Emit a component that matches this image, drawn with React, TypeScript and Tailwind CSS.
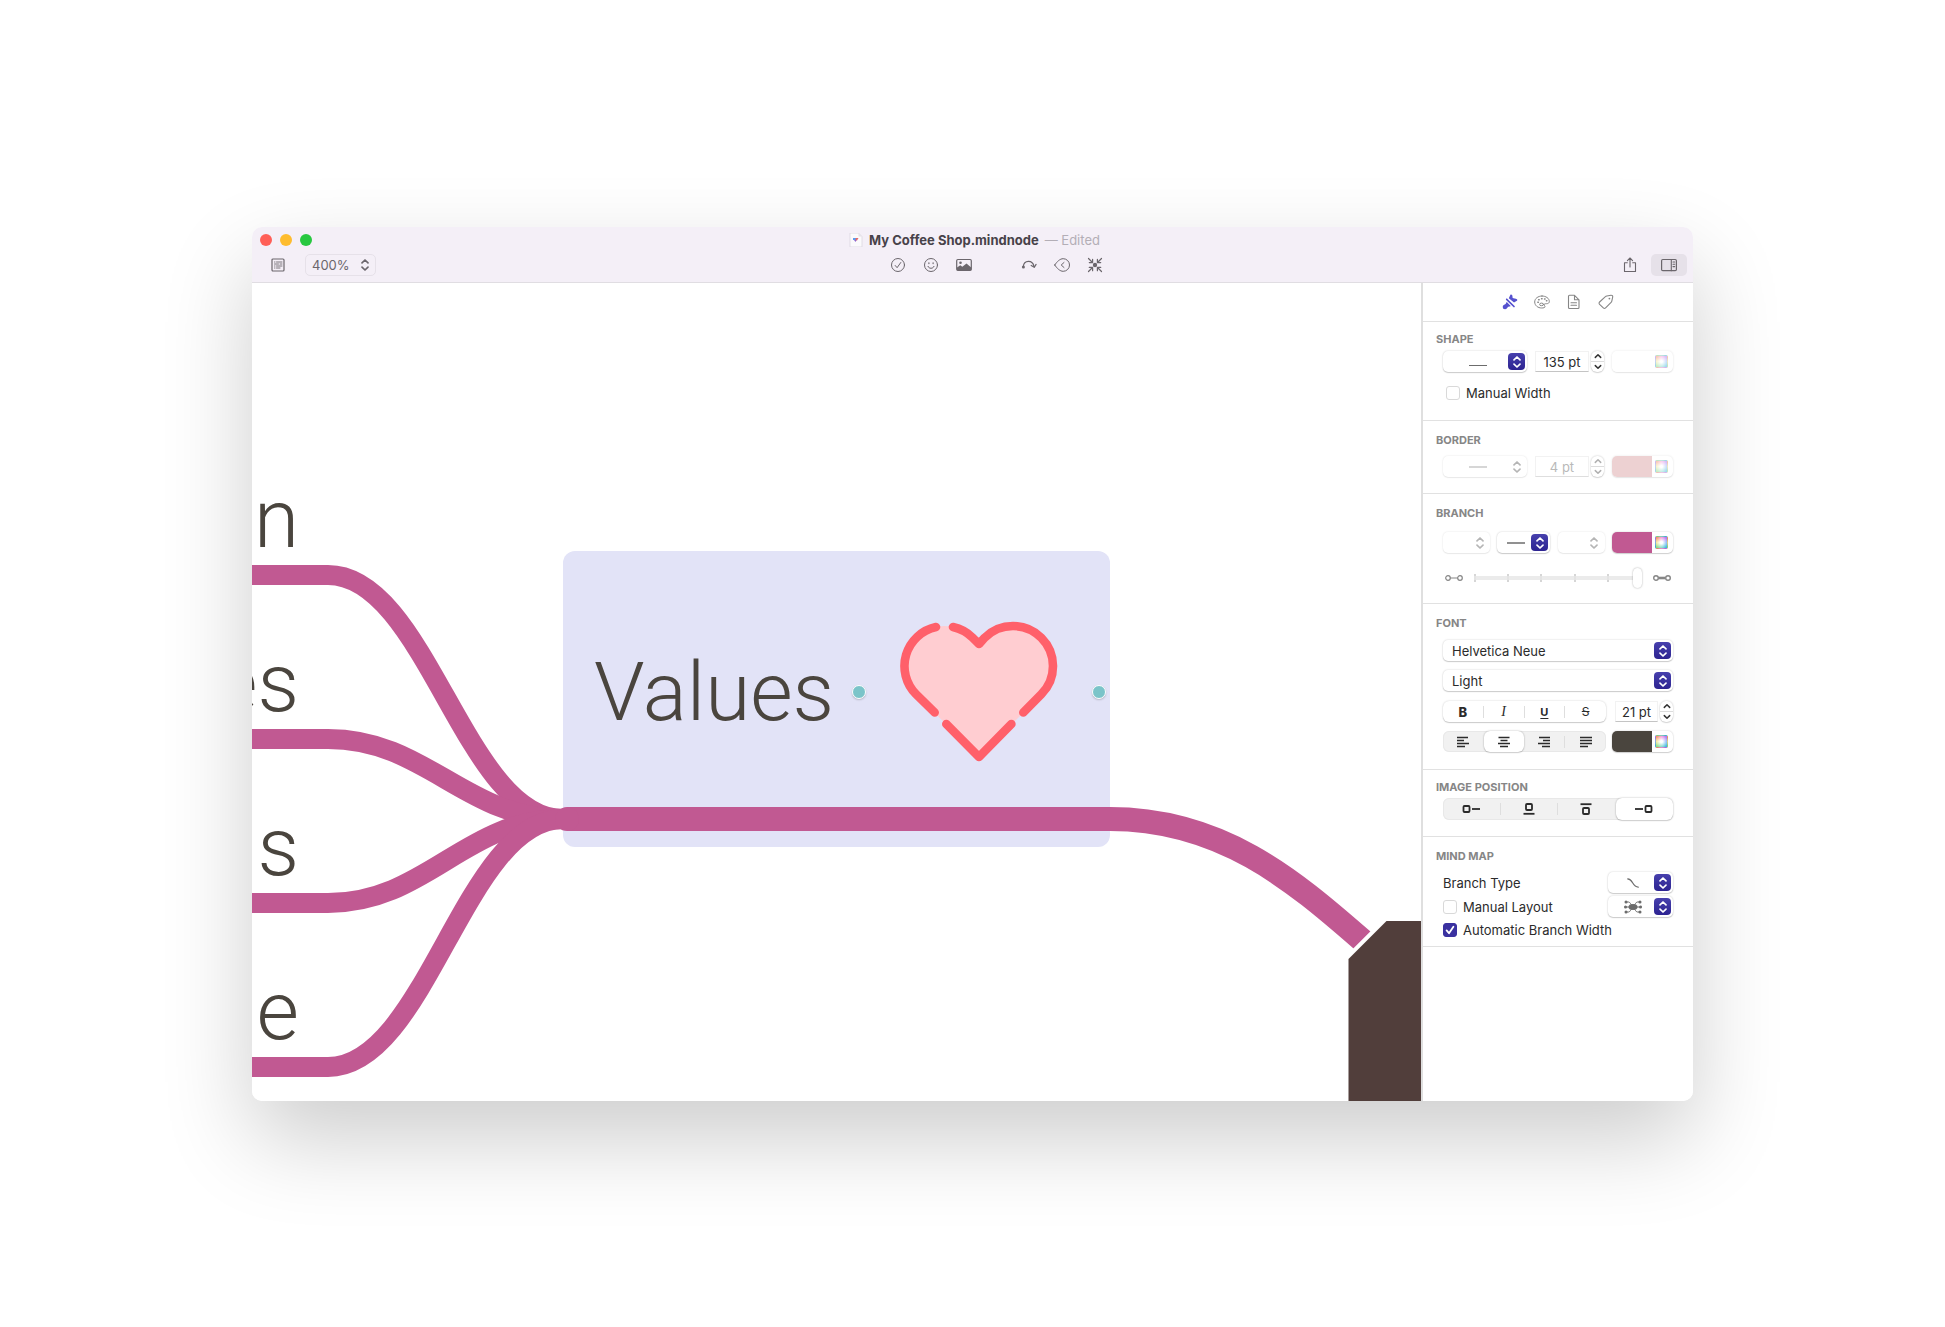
import type { ReactNode } from 'react';
import clsx from 'clsx';

interface IconProps {
  children: ReactNode;
  className?: string;
  box?: string;
}

function Icon({ children, className = 'size-4', box = '0 0 16 16' }: IconProps) {
  return (
    <svg
      viewBox={box}
      className={clsx('shrink-0', className)}
      fill="none"
      stroke="currentColor"
      strokeWidth={1}
      strokeLinecap="round"
      strokeLinejoin="round"
      aria-hidden="true"
    >
      {children}
    </svg>
  );
}

const lineGlyph = <path d="M0 8H18" strokeWidth={1.5} strokeLinecap="butt" />;

function Chevrons({ className }: { className?: string }) {
  return (
    <svg viewBox="0 0 10 14" className={clsx('h-3.5 w-2.5', className)} fill="none" stroke="currentColor" strokeWidth={1.7} strokeLinecap="round" strokeLinejoin="round" aria-hidden="true">
      <path d="M2 4.8 5 2l3 2.8M2 9.2 5 12l3-2.8" />
    </svg>
  );
}

interface PopUpProps {
  label: string;
  className: string;
  value?: string;
  glyph?: ReactNode;
  disabled?: boolean;
}

function PopUp({ label, className, value, glyph, disabled }: PopUpProps) {
  return (
    <div className={clsx('relative flex h-[21px] shrink-0', className)}>
      <select
        aria-label={label}
        disabled={disabled}
        className={clsx(
          'w-full appearance-none rounded-[5px] bg-white pl-[9px] text-[13px] leading-5 text-[#2b2b2b]',
          disabled
            ? 'shadow-[0_0_2px_rgba(0,0,0,0.12),0_1px_1px_rgba(0,0,0,0.06)]'
            : 'shadow-[0_0_2px_rgba(0,0,0,0.2),0_1px_1px_rgba(0,0,0,0.16)]'
        )}
      >
        <option aria-label={value ?? label}>{value}</option>
      </select>
      {glyph && (
        <span className={clsx('pointer-events-none absolute inset-y-0 right-[22px] left-0 flex items-center justify-center', disabled ? 'text-[#c9c9c9]' : 'text-[#6c6c6c]')}>
          {glyph}
        </span>
      )}
      <span
        className={clsx(
          'pointer-events-none absolute top-[2px] right-[2px] flex size-[17px] items-center justify-center rounded-sm',
          disabled ? 'text-[#b5b5b5]' : 'bg-linear-to-b from-[#4740ad] to-[#2d2391] text-white'
        )}
      >
        <Chevrons />
      </span>
    </div>
  );
}

interface StepFieldProps {
  label: string;
  value: string;
  inputClass: string;
  disabled?: boolean;
}

function StepField({ label, value, inputClass, disabled }: StepFieldProps) {
  return (
    <div className="flex shrink-0 items-center gap-0.5">
      <input
        type="text"
        aria-label={label}
        defaultValue={value}
        disabled={disabled}
        className={clsx(
          'h-[21px] border border-[#f2f2f2] bg-white text-center text-[13px]',
          disabled ? 'border-b-[#dedede] text-[#b9b9b9]' : 'border-b-[#c4c4c4] text-[#2b2b2b]',
          inputClass
        )}
      />
      <div
        className={clsx(
          'flex h-[21px] w-[13px] flex-col divide-y divide-[#dcdcdc] rounded-md bg-white shadow-[0_0_2px_rgba(0,0,0,0.25),0_1px_1px_rgba(0,0,0,0.1)]',
          disabled ? 'text-[#b0b0b0]' : 'text-[#333]'
        )}
      >
        <button type="button" aria-label={`Increase ${label}`} disabled={disabled} className="flex flex-1 items-center justify-center">
          <Icon box="0 0 8 6" className="h-1.5 w-2"><path d="M1.3 4.4 4 1.8l2.7 2.6" strokeWidth={1.5} /></Icon>
        </button>
        <button type="button" aria-label={`Decrease ${label}`} disabled={disabled} className="flex flex-1 items-center justify-center">
          <Icon box="0 0 8 6" className="h-1.5 w-2"><path d="M1.3 1.6 4 4.2l2.7-2.6" strokeWidth={1.5} /></Icon>
        </button>
      </div>
    </div>
  );
}

function ColorWell({ label, swatch, faded }: { label: string; swatch: string; faded?: boolean }) {
  return (
    <button
      type="button"
      aria-label={label}
      className={clsx(
        'flex h-[21px] w-[61px] shrink-0 overflow-hidden rounded-[5px] bg-white shadow-[0_0_2px_rgba(0,0,0,0.2),0_1px_1px_rgba(0,0,0,0.14)]',
        faded && 'opacity-50'
      )}
    >
      <span className={clsx('h-full w-10', swatch)} />
      <span className="flex h-full items-center pl-[3px]">
        <span className="size-[13px] rounded-xs border border-black/10 bg-[radial-gradient(circle,white_15%,transparent_85%),conic-gradient(#f47ad0,#b47af4,#6aa2f8,#44bce0,#66d0bc,#92e084,#f2e074,#f6986c,#f47ad0)]" />
      </span>
    </button>
  );
}

function Section({ title, className, children }: { title: string; className: string; children: ReactNode }) {
  return (
    <section className={clsx('border-b border-[#e1e1e1] px-5', className)}>
      <h2 className="-ml-[7px] text-[11px] leading-4 font-bold text-[#868686]">{title}</h2>
      {children}
    </section>
  );
}

function CheckRow({ label, checked, className }: { label: string; checked?: boolean; className?: string }) {
  return (
    <label className={clsx('flex items-center text-[13px] leading-4 text-[#2b2b2b]', className)}>
      <span className="relative flex size-3.5">
        <input
          type="checkbox"
          defaultChecked={checked}
          className="peer size-3.5 appearance-none rounded-[3px] border border-[#d9d9d9] bg-white checked:border-[#3a31a0] checked:bg-[#3a31a0]"
        />
        <Icon box="0 0 14 14" className="pointer-events-none absolute inset-0 hidden size-3.5 text-white peer-checked:block">
          <path d="m3.6 7.4 2.4 2.8 4.4-6.4" strokeWidth={1.8} />
        </Icon>
      </span>
      {label}
    </label>
  );
}

interface Segment {
  label: string;
  glyph: ReactNode;
}

function Segments({ items, active, className }: { items: Segment[]; active?: number; className: string }) {
  return (
    <div
      className={clsx(
        'flex shrink-0 rounded-md',
        active === undefined
          ? 'bg-white shadow-[0_0_2px_rgba(0,0,0,0.2),0_1px_1px_rgba(0,0,0,0.16)]'
          : 'bg-[#f1f1f1] shadow-[inset_0_0_0_1px_#e8e8e8]',
        className
      )}
    >
      {items.map((item, i) => (
        <div key={item.label} className="flex flex-1 items-center">
          <button
            type="button"
            aria-label={item.label}
            aria-pressed={i === active}
            className={clsx(
              'flex h-full flex-1 items-center justify-center text-[#2b2b2b]',
              i === active && 'rounded-md bg-white shadow-[0_0_2px_rgba(0,0,0,0.3),0_1px_1px_rgba(0,0,0,0.12)]'
            )}
          >
            {item.glyph}
          </button>
          {i < items.length - 1 && (
            <span className={clsx('h-3 w-px', i === active || i + 1 === active ? 'bg-transparent' : 'bg-[#dedede]')} />
          )}
        </div>
      ))}
    </div>
  );
}

const styleSegments: Segment[] = [
  { label: 'Bold', glyph: <span className="text-[13px] leading-4 font-extrabold">B</span> },
  { label: 'Italic', glyph: <span className="font-['Liberation_Serif',serif] text-[14px] leading-4 italic">I</span> },
  { label: 'Underline', glyph: <span className="text-[11px] leading-4 font-bold underline underline-offset-2">U</span> },
  { label: 'Strikethrough', glyph: <span className="text-[12px] leading-4 line-through">S</span> },
];

const alignGlyph = (d: string) => (
  <Icon className="h-3 w-4" box="0 0 16 12">
    <path d={d} strokeWidth={1.3} strokeLinecap="butt" />
  </Icon>
);

const alignSegments: Segment[] = [
  { label: 'Align left', glyph: alignGlyph('M2 1.5h11M2 4.5h7M2 7.5h12M2 10.5h8') },
  { label: 'Align centre', glyph: alignGlyph('M2.5 1.5h11M4.5 4.5h7M2 7.5h12M4 10.5h8') },
  { label: 'Align right', glyph: alignGlyph('M3 1.5h11M7 4.5h7M2 7.5h12M6 10.5h8') },
  { label: 'Justify', glyph: alignGlyph('M2 1.5h12M2 4.5h12M2 7.5h12M2 10.5h8') },
];

const imageGlyph = (x: number, y: number, d: string) => (
  <Icon className="h-3 w-[18px]" box="0 0 18 12">
    <rect x={x} y={y} width={6} height={6} rx={1} strokeWidth={1.8} />
    <path d={d} strokeWidth={1.8} strokeLinecap="butt" />
  </Icon>
);

const imageSegments: Segment[] = [
  { label: 'Image left', glyph: imageGlyph(1.5, 3, 'M10 6h8') },
  { label: 'Image above', glyph: imageGlyph(6, 1, 'M3.5 10.8h11') },
  { label: 'Image below', glyph: imageGlyph(6, 5, 'M3.5 1.2h11') },
  { label: 'Image right', glyph: imageGlyph(10.5, 3, 'M0 6h8') },
];

function ToolButton({ label, className, children }: { label: string; className?: string; children: ReactNode }) {
  return (
    <button type="button" aria-label={label} className={clsx('flex h-[22px] items-center justify-center', className)}>
      {children}
    </button>
  );
}

function TitleBar() {
  return (
    <header className="border-b border-[#e0dde2] bg-[#f4eff7] pb-[5px] text-[#6b666c]">
      <div className="grid h-[26px] grid-cols-[1fr_auto_1fr] items-center">
        <div className="flex gap-2 pl-2">
          <button type="button" aria-label="Close" className="size-3 rounded-full bg-[#ff5f57]" />
          <button type="button" aria-label="Minimise" className="size-3 rounded-full bg-[#febc2e]" />
          <button type="button" aria-label="Zoom window" className="size-3 rounded-full bg-[#28c840]" />
        </div>
        <div className="flex items-center gap-1.5 pl-1 text-[13px] leading-4">
          <svg viewBox="0 0 14 14" className="size-3.5" aria-hidden="true">
            <path d="M1 0h8.500l3.500 3.500V14H1z" fill="#fbfafc" stroke="#dcd7e0" strokeWidth={0.8} />
            <path d="M9.500 0v3.500H13z" fill="#e6e2e8" />
            <path d="M4 5h3v2H4z" fill="#5a9cf0" />
            <path d="M7 5h2.500L8 7.500H6z" fill="#e46a6a" />
            <path d="M5 7h2.500L6.500 9z" fill="#8b6ad0" />
          </svg>
          <h1 className="font-bold text-[#474249]">My Coffee Shop.mindnode</h1>
          <span className="text-[#b3aeb6]">— Edited</span>
        </div>
      </div>

      <div className="flex h-6 items-center justify-between pr-1.5 pl-[17px]">
        <div className="flex items-center gap-[18px]">
          <ToolButton label="Outline" className="w-[18px]">
            <Icon>
              <rect x={2} y={2} width={12} height={12} rx={1} strokeWidth={1.2} />
              <path d="M4.500 5h.5M6.500 5H12M4.500 7h4M10 7h2M4.500 9h.5M6.500 9H12M4.500 11h.5M6.500 11H10" strokeWidth={0.9} />
            </Icon>
          </ToolButton>
          <div className="relative flex h-[22px] w-[71px]">
            <select aria-label="Zoom" className="w-full appearance-none rounded-[5px] border border-[#e6e1e9] bg-transparent pl-1.5 text-[13px] leading-5">
              <option>400%</option>
            </select>
            <span className="pointer-events-none absolute inset-y-0 right-1.5 flex items-center">
              <Chevrons />
            </span>
          </div>
        </div>

        <div className="flex">
          <ToolButton label="Task" className="w-[33px]">
            <Icon>
              <circle cx={8} cy={8} r={6.500} />
              <path d="m5.200 8.500 1.900 2.200 3.700-5.200" />
            </Icon>
          </ToolButton>
          <ToolButton label="Sticker" className="w-[33px]">
            <Icon>
              <circle cx={8} cy={8} r={6.500} />
              <path d="M5 9.400c.6 2.600 5.400 2.600 6 0" />
              <path d="M5.900 5.800v.8M10.100 5.800v.8" strokeWidth={1.200} />
            </Icon>
          </ToolButton>
          <ToolButton label="Image" className="w-[33px]">
            <Icon>
              <rect x={0.700} y={2.500} width={14.600} height={11} rx={1.200} strokeWidth={1.200} />
              <path d="M1 13.300v-2.800l3.300-2.200 2 1.500L10.500 6.500l4.700 4v2.800z" fill="currentColor" stroke="none" />
              <circle cx={4.500} cy={5.800} r={1.300} fill="currentColor" stroke="none" />
            </Icon>
          </ToolButton>
          <ToolButton label="Connection" className="ml-8 w-[33px]">
            <Icon>
              <path d="M2.300 9.500C3 3 11.500 2.500 13 9.500" strokeWidth={1.200} />
              <path d="m10.200 8.500 3 1.800 1.900-2.900" strokeWidth={1.200} />
              <circle cx={2.400} cy={10} r={1.500} fill="currentColor" stroke="none" />
            </Icon>
          </ToolButton>
          <ToolButton label="Fold" className="w-[33px]">
            <Icon>
              <path d="M.8 8C3 4.500 6 1.700 9.200 1.700a6.300 6.300 0 0 1 0 12.600C6 14.300 3 11.500.8 8z" />
              <path d="M10 5.500 7.200 8l2.800 2.500" />
            </Icon>
          </ToolButton>
          <ToolButton label="Focus" className="w-[33px]">
            <Icon>
              <circle cx={8} cy={8} r={2.200} fill="currentColor" stroke="none" />
              <path d="m1.500 1.500 4 4M5.600 2.300v3.300H2.300M14.500 1.500l-4 4M10.400 2.300v3.300h3.300M1.500 14.500l4-4M5.600 13.700v-3.300H2.300M14.500 14.500l-4-4M10.400 13.700v-3.300h3.300" strokeWidth={1.200} />
            </Icon>
          </ToolButton>
        </div>

        <div className="flex gap-[7px]">
          <ToolButton label="Share" className="w-7">
            <Icon>
              <path d="M5.300 5.800H2.500v8.700h11V5.800h-2.800M8 10V1.200M5.400 3.600 8 1l2.600 2.600" strokeWidth={1.100} />
            </Icon>
          </ToolButton>
          <ToolButton label="Inspector" className="w-9 rounded-[5px] bg-[#e6e1e9]">
            <Icon>
              <rect x={0.600} y={2.500} width={14.800} height={11.200} rx={1.200} strokeWidth={1.200} />
              <path d="M10.300 2.500v11.200M12 5h1.700M12 7.300h1.700M12 9.600h1.700" strokeWidth={1.100} />
            </Icon>
          </ToolButton>
        </div>
      </div>
    </header>
  );
}

const sideNodes = [
  { text: 'n', pos: 'top-[186px]' },
  { text: 'es', pos: 'top-[350px]' },
  { text: 's', pos: 'top-[514px]' },
  { text: 'e', pos: 'top-[678px]' },
];

const branchEnds = [292, 456, 620, 784];

function Handle() {
  return <span className="size-3.5 shrink-0 rounded-full border-[1.5px] border-white bg-[#7bc4c9] shadow-[0_1px_2px_rgba(0,0,0,0.2)]" />;
}

function Canvas() {
  return (
    <main className="relative min-w-0 flex-1 overflow-hidden bg-white font-['Roboto',sans-serif] text-[82px] leading-[100px] font-light text-[#4a453e]">
      {/* selected node */}
      <div className="absolute top-[268px] left-[311px] h-[296px] w-[547px] rounded-xl bg-[#e2e3f7]">
        <div className="flex h-[281px] items-center pl-[31px]">
          <span className="w-[258px]">Values</span>
          <Handle />
          <svg viewBox="648 338 158 142" className="mx-[34px] h-[142px] w-[158px] shrink-0" fill="none" stroke="#ff606a" strokeWidth={8.6} strokeLinecap="round" strokeLinejoin="round" role="img" aria-label="Heart">
            <path d="M727 474 664 411.300A40 40 0 0 1 720.700 354.700L727 361l6-6.300A40 40 0 0 1 789.700 411.300z" fill="#ffcdd1" stroke="none" />
            <path d="M684 344A40 40 0 0 0 664.100 411.300L682.700 429.500" />
            <path d="M701 344a40 40 0 0 1 19.700 10.700L727 361l5.700-6.300A40 40 0 0 1 789.300 411.300L771.300 429.500" />
            <path d="m694.300 441 32.700 33 32.400-33" />
          </svg>
          <Handle />
        </div>
      </div>

      <svg className="absolute inset-0 size-full" fill="none" stroke="#c15992" aria-hidden="true">
        {branchEnds.map((y) => (
          <path key={y} d={`M0 ${y}H76C174 ${y} 213 536 311 536`} strokeWidth={20} />
        ))}
        <path d="M315 536H858C969 536 1040 596 1110 657L1130 675" strokeWidth={24} />
        <circle cx={315} cy={536} r={12} fill="#c15992" stroke="none" />
        <path d="M1096.500 900V676L1134.500 638H1300V900z" fill="#513e3b" stroke="#fff" strokeWidth={8} paintOrder="stroke" />
      </svg>

      {sideNodes.map((node) => (
        <div key={node.text} className={clsx('absolute left-0 flex w-[47px] justify-end', node.pos)}>
          {node.text}
        </div>
      ))}
    </main>
  );
}

const inspectorTabs = [
  {
    label: 'Style',
    icon: (
      <g fill="currentColor" stroke="none">
        <path d="M6.800 4.200 8.300.9c.6-.9 1.600-.3 1.900.4.500 1 .2 1.900.5 2.600.900.7 3.200.4 4.200 1.300.8.8.4 1.500-.4 1.900l-2.500 1.300z" />
        <path d="m5.300 4.700 7.300 7.300c.4.400.4.800 0 1.100-.4.400-.800.4-1.200 0L4.100 5.900c-.3-.4-.3-.8 0-1.200.4-.4.8-.4 1.200 0z" />
        <path d="m4.800 8 3.900 3.900c-.9.900-2 .4-2.700.8-.5.900-1.200 2.500-3 2.600a2.300 2.300 0 0 1-2.300-2.400c0-1.700 1.800-2.200 2.900-2.900.5-.500.3-1.100 1.200-2z" />
      </g>
    ),
  },
  {
    label: 'Theme',
    icon: (
      <>
        <path d="M8 2C3.800 2 .7 4.600.7 8s3.100 6 7 6c1.700 0 3.300-.3 3.300-1.400 0-.9-.9-1-.9-1.800 0-1 1-1.100 2.300-1.100 1.700 0 2.900-.6 2.900-2.200C15.300 4.300 12 2 8 2z" />
        <ellipse cx={7.600} cy={10.400} rx={2} ry={1.300} />
        <path d="M3.800 8.200h.6M4.600 5.800h.6M7.500 4.700h.6M10.500 5h.6M12.400 6.700h.5" strokeWidth={1.400} />
      </>
    ),
  },
  {
    label: 'Document',
    icon: <path d="M3.500 1.300h5L13 5.800v7.700a1 1 0 0 1-1 1H3.500a1 1 0 0 1-1-1V2.300a1 1 0 0 1 1-1zM8.500 1.500v4.300H13M5 8.700h5.500M5 11.300h5.500" strokeWidth={1.100} />,
  },
  {
    label: 'Tags',
    icon: (
      <>
        <path d="M8.800 2 13 1.300c1.200-.1 1.900.7 1.700 1.700l-.9 4.200c-.1.500-.3.800-.7 1.200l-5.500 5.500c-.7.700-1.600.7-2.300 0L1.600 10.300c-.7-.7-.7-1.600 0-2.300L7.400 2.700c.4-.4.8-.6 1.400-.7z" strokeWidth={1.100} />
        <circle cx={11.400} cy={4.600} r={0.900} fill="currentColor" stroke="none" />
      </>
    ),
  },
];

function Inspector() {
  return (
    <aside className="w-[272px] shrink-0 border-l-2 border-[#dfdfdf] bg-white">
      <nav className="flex h-[39px] items-center justify-center gap-4 border-b border-[#e1e1e1]">
        {inspectorTabs.map((tab, i) => (
          <button key={tab.label} type="button" aria-label={tab.label} className={i === 0 ? 'text-[#5551cf]' : 'text-[#868686]'}>
            <Icon>{tab.icon}</Icon>
          </button>
        ))}
      </nav>

      <Section title="SHAPE" className="pt-[9px] pb-[19px]">
        <div className="mt-1 flex justify-between">
          <PopUp label="Shape" className="w-[84px]" glyph={<Icon className="ml-2 h-4 w-[18px]" box="0 0 18 16"><path d="M0 11.500H18" strokeLinecap="butt" /></Icon>} />
          <StepField label="Shape width" value="135 pt" inputClass="w-[54px]" />
          <ColorWell label="Shape colour" swatch="bg-white" faded />
        </div>
        <CheckRow label="Manual Width" className="mt-[13px] ml-[3px] gap-1.5" />
      </Section>

      <Section title="BORDER" className="pt-[11px] pb-4">
        <div className="mt-2 flex justify-between">
          <PopUp label="Border style" className="w-[84px]" disabled glyph={<Icon className="ml-2 h-4 w-[18px]" box="0 0 18 16">{lineGlyph}</Icon>} />
          <StepField label="Border width" value="4 pt" inputClass="w-[54px]" disabled />
          <ColorWell label="Border colour" swatch="bg-[#dda5a7]" faded />
        </div>
      </Section>

      <Section title="BRANCH" className="pt-[11px] pb-[15px]">
        <div className="mt-[11px] flex justify-between">
          <PopUp label="Branch start" className="w-[47px]" disabled />
          <PopUp label="Branch line" className="w-[53px]" glyph={<Icon className="ml-1.5 h-4 w-[18px]" box="0 0 18 16">{lineGlyph}</Icon>} />
          <PopUp label="Branch end" className="w-[47px]" disabled />
          <ColorWell label="Branch colour" swatch="bg-[#c15992]" />
        </div>
        <div className="mt-3.5 flex h-[21px] items-center justify-between px-0.5 text-[#868686]">
          <Icon className="h-2 w-[18px]" box="0 0 18 8">
            <circle cx={3} cy={4} r={2.300} strokeWidth={1.200} />
            <circle cx={15} cy={4} r={2.300} strokeWidth={1.200} />
            <path d="M5.500 4h7" strokeWidth={1.200} />
          </Icon>
          <div className="grid w-[168px] items-center">
            <div className="flex justify-between [grid-area:1/1]">
              {[0, 1, 2, 3, 4].map((tick) => (
                <span key={tick} className="h-2 w-0.5 bg-[#d6d6d6]" />
              ))}
              <span className="w-0.5" />
            </div>
            <input
              type="range"
              aria-label="Branch width"
              min={0}
              max={5}
              defaultValue={5}
              className="relative h-[21px] w-full appearance-none bg-transparent [grid-area:1/1] [&::-webkit-slider-runnable-track]:h-1 [&::-webkit-slider-runnable-track]:bg-[#e6e6e6]/80 [&::-webkit-slider-thumb]:-mt-2 [&::-webkit-slider-thumb]:h-5 [&::-webkit-slider-thumb]:w-[9px] [&::-webkit-slider-thumb]:appearance-none [&::-webkit-slider-thumb]:rounded-full [&::-webkit-slider-thumb]:bg-white [&::-webkit-slider-thumb]:shadow-[0_0_2px_rgba(0,0,0,0.35)]"
            />
          </div>
          <Icon className="h-2 w-[18px]" box="0 0 18 8">
            <circle cx={3} cy={4} r={2.300} strokeWidth={1.400} />
            <circle cx={15} cy={4} r={2.300} strokeWidth={1.400} />
            <path d="M5.500 4h7" strokeWidth={2.600} strokeLinecap="butt" />
          </Icon>
        </div>
      </Section>

      <Section title="FONT" className="pt-[11px] pb-[17px]">
        <div className="mt-[9px] flex flex-col gap-[9px]">
          <PopUp label="Font family" className="w-full" value="Helvetica Neue" />
          <PopUp label="Font weight" className="w-full" value="Light" />
          <div className="mt-px flex justify-between">
            <Segments items={styleSegments} className="h-[21px] w-[163px]" />
            <StepField label="Font size" value="21 pt" inputClass="w-[43px]" />
          </div>
          <div className="flex justify-between">
            <Segments items={alignSegments} active={1} className="h-[21px] w-[163px]" />
            <ColorWell label="Font colour" swatch="bg-[#4a453e]" />
          </div>
        </div>
      </Section>

      <Section title="IMAGE POSITION" className="pt-[9px] pb-4">
        <Segments items={imageSegments} active={3} className="mt-[3px] h-[22px]" />
      </Section>

      <Section title="MIND MAP" className="pt-[11px] pb-2">
        <div className="mt-2 flex items-center justify-between">
          <span className="text-[13px] leading-4 text-[#2b2b2b]">Branch Type</span>
          <PopUp label="Branch Type" className="w-[65px]" glyph={<Icon className="ml-1.5 size-3"><path d="M1 2.500C8 2.500 7 13.500 15 13.500" strokeWidth={1.600} /></Icon>} />
        </div>
        <div className="mt-[3px] flex items-center justify-between">
          <CheckRow label="Manual Layout" className="gap-1.5" />
          <PopUp
            label="Layout"
            className="w-[65px]"
            glyph={
              <Icon className="ml-1.5 h-3.5 w-[18px]" box="0 0 18 14">
                <ellipse cx={9} cy={7} rx={4.500} ry={3} fill="currentColor" stroke="none" />
                <path d="M2 2h2.500c2 0 2 3 4.500 4 2.500-1 2.500-4 4.500-4H16M2 12h2.500c2 0 2-3 4.500-4 2.500 1 2.500 4 4.500 4H16M1 7h16" />
                <path d="M2 2h.01M16 2h.01M2 12h.01M16 12h.01M1.500 7h.01M16.500 7h.01" strokeWidth={3} />
              </Icon>
            }
          />
        </div>
        <CheckRow label="Automatic Branch Width" checked className="mt-[5px] gap-1.5" />
      </Section>
    </aside>
  );
}

export default function App() {
  return (
    <div className="flex min-h-screen flex-col bg-white px-63 pt-[227px] pb-[226px] font-['Inter',sans-serif]">
      <div className="flex flex-1 flex-col overflow-hidden rounded-[10px] bg-white shadow-[0_38px_90px_rgba(0,0,0,0.2)]">
        <TitleBar />
        <div className="flex flex-1">
          <Canvas />
          <Inspector />
        </div>
      </div>
    </div>
  );
}
